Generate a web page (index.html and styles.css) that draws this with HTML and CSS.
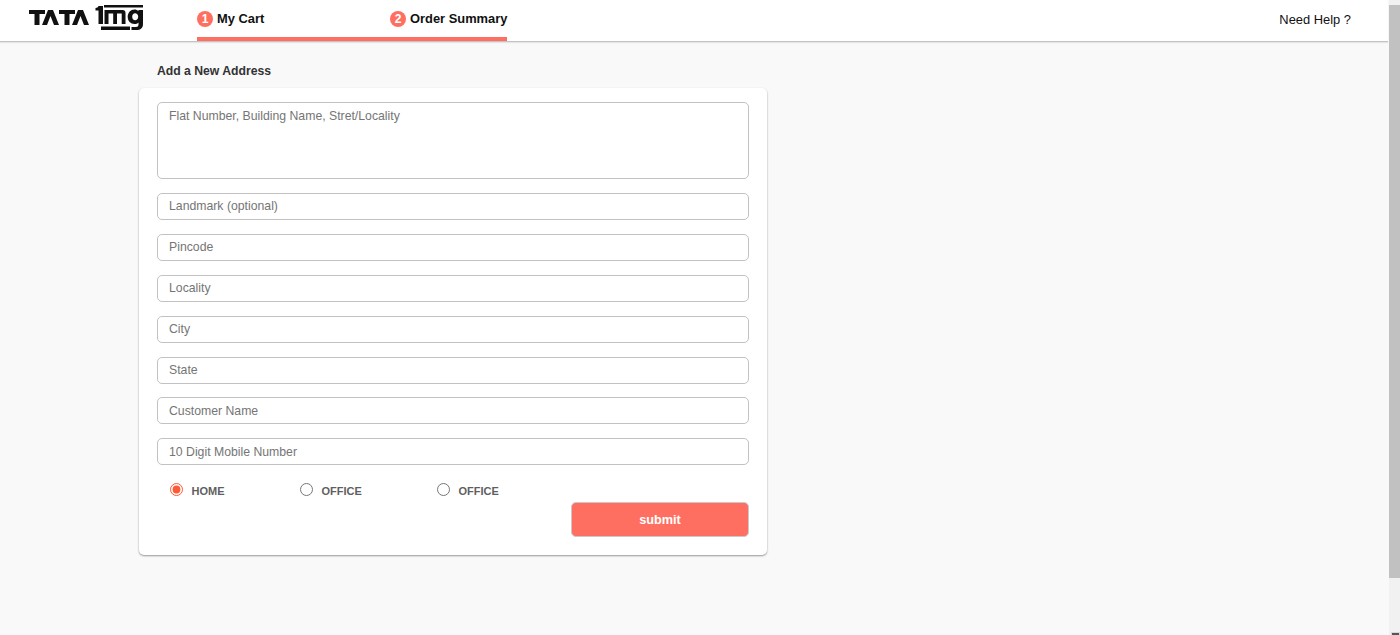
FILE: index.html
```html
<!DOCTYPE html>
<html lang="en">
<head>
<meta charset="utf-8">
<title>Add a New Address</title>
<link rel="stylesheet" href="styles.css">
</head>
<body>
<div class="app">
  <div class="page">
    <header class="topbar">
      <a class="logo" href="#" aria-label="Tata 1mg">
        <svg width="116" height="32" viewBox="0 0 116 32" fill="#111">
          <path d="M1 10h16v4h-5.500v11h-5V14H1z"/>
          <path d="M20 10h5l6 15h-5l-3.500-9L19 25h-5z"/>
          <path d="M31 10h16v4h-5.500v11h-5V14H31z"/>
          <path d="M50 10h5l6 15h-5l-3.500-9L49 25h-5z"/>
          <path d="M70.500 6h4.500v18h-4.500V10.500h-3V8c1.500 0 2.700-.7 3-2z"/>
          <path d="M76 5h39v2.500H76z"/>
          <path d="M73 26.500h29v3.500H73z"/>
          <path d="M76.500 10h18c2 0 3 1 3 3v11h-3.800V13.500h-4.700V24h-3.800V13.500h-4.700V24h-4z"/>
          <path fill-rule="evenodd" d="M106.500 9.500c1.500 0 3 .6 4 1.600V10h4.500v14c0 4-2.500 6-6.500 6h-5v-3h4.500c1.500 0 2.500-.8 2.500-2.500v-2.100c-1 1-2.500 1.600-4 1.600-3.900 0-6.800-2.900-6.800-7.200 0-4.200 2.900-7.300 6.800-7.300zm.6 3.800c-1.700 0-2.900 1.500-2.900 3.500s1.200 3.400 2.900 3.400 3.100-1.400 3.100-3.400-1.400-3.500-3.100-3.500z"/>
        </svg>
      </a>
      <nav class="steps">
        <a class="step step-first" href="#"><span class="step-num">1</span>My Cart</a>
        <a class="step" href="#"><span class="step-num">2</span>Order Summary</a>
      </nav>
      <a class="help" href="#">Need Help ?</a>
    </header>

    <main class="content">
      <h1 class="title">Add a New Address</h1>
      <form class="card">
        <textarea class="field field-area" placeholder="Flat Number, Building Name, Stret/Locality"></textarea>
        <input class="field" type="text" placeholder="Landmark (optional)">
        <input class="field" type="text" placeholder="Pincode">
        <input class="field" type="text" placeholder="Locality">
        <input class="field" type="text" placeholder="City">
        <input class="field" type="text" placeholder="State">
        <input class="field" type="text" placeholder="Customer Name">
        <input class="field" type="text" placeholder="10 Digit Mobile Number">
        <div class="radios">
          <label class="radio radio-home"><input type="radio" name="kind" checked><span>HOME</span></label>
          <label class="radio radio-office"><input type="radio" name="kind"><span>OFFICE</span></label>
          <label class="radio"><input type="radio" name="kind"><span>OFFICE</span></label>
        </div>
        <div class="actions">
          <button class="submit" type="button">submit</button>
        </div>
      </form>
    </main>
  </div>
  <div class="scrollbar" aria-hidden="true">
    <div class="scroll-thumb"></div>
    <div class="scroll-mark"></div>
  </div>
</div>
</body>
</html>
```
FILE: styles.css
```css
* { box-sizing: border-box; }

html, body {
  margin: 0;
  height: 635px;
  overflow: hidden;
}

body {
  font-family: "Liberation Sans", Arial, sans-serif;
  background: #f9f9f9;
  color: #212121;
}

.app {
  display: flex;
  height: 635px;
}

.page {
  flex: 1;
  min-width: 0;
}

.topbar {
  display: flex;
  align-items: stretch;
  height: 42px;
  margin-right: 1px;
  background: #fff;
  border-bottom: 1px solid #c4c4c4;
  box-shadow: 0 1px 1px rgba(0, 0, 0, 0.08);
}

.logo {
  display: block;
  width: 197px;
  padding-left: 28px;
}

.logo svg { display: block; }

.steps {
  display: flex;
  height: 41px;
  border-bottom: 4px solid #ff6f61;
}

.step {
  display: flex;
  align-items: center;
  height: 37px;
  font-size: 12.900px;
  font-weight: 700;
  color: #111;
  text-decoration: none;
  white-space: nowrap;
}

.step-first { width: 193px; }

.step-num {
  display: flex;
  align-items: center;
  justify-content: center;
  width: 16px;
  height: 16px;
  margin-right: 4px;
  border-radius: 50%;
  background: #ff6f61;
  color: #fff;
  font-size: 12px;
  font-weight: 700;
}

.help {
  margin-left: auto;
  padding: 12px 37px 0 0;
  font-size: 12.900px;
  color: #111;
  text-decoration: none;
}

.content {
  width: 628px;
  margin-left: 139px;
}

.title {
  margin: 0;
  padding: 22px 0 10px 18px;
  font-size: 12.200px;
  line-height: 14px;
  font-weight: 700;
  color: #333;
}

.card {
  display: flex;
  flex-direction: column;
  gap: 13.900px;
  height: 467px;
  padding: 14.050px 18px 0;
  background: #fff;
  border-radius: 5px;
  box-shadow: 0 1px 2px rgba(0, 0, 0, 0.4);
}

.field {
  display: block;
  width: 100%;
  height: 27px;
  flex: none;
  padding: 0 11px;
  font-family: inherit;
  font-size: 12.250px;
  color: #333;
  background: #fff;
  border: 1px solid #c2c2c2;
  border-radius: 5px;
  outline: none;
  resize: none;
}

.field-area {
  height: 77px;
  padding-top: 6px;
  line-height: 14px;
}

.field::placeholder {
  color: #757575;
  opacity: 1;
}

.radios {
  display: flex;
  height: 24px;
  margin-top: -1.650px;
  padding-left: 13px;
}

.radio {
  display: flex;
  align-items: center;
  font-size: 11px;
  font-weight: 700;
  color: #5f5f5f;
}

.radio span { padding-top: 2px; }

.radio-home { width: 130px; }
.radio-office { width: 137px; }

.radio input {
  width: 13px;
  height: 13px;
  margin: 0 8.500px 0 0;
  accent-color: #ff5a36;
}

.actions {
  display: flex;
  justify-content: flex-end;
  margin-top: -13.500px;
}

.submit {
  width: 178px;
  height: 35px;
  padding-top: 2px;
  font-family: inherit;
  font-size: 12.700px;
  font-weight: 700;
  color: #fff;
  background: #ff6f61;
  border: 1px solid #c9c9c9;
  border-radius: 5px;
}

.scrollbar {
  display: flex;
  flex-direction: column;
  flex: none;
  width: 11px;
  padding-top: 5px;
  background: #f1f1f1;
}

.scroll-thumb {
  height: 573px;
  background: #c1c1c1;
}

.scroll-mark {
  width: 7px;
  height: 2px;
  margin: auto 0 0 3px;
  background: #555;
  box-shadow: 0 0 0 1px #d8d8d8;
}
```
